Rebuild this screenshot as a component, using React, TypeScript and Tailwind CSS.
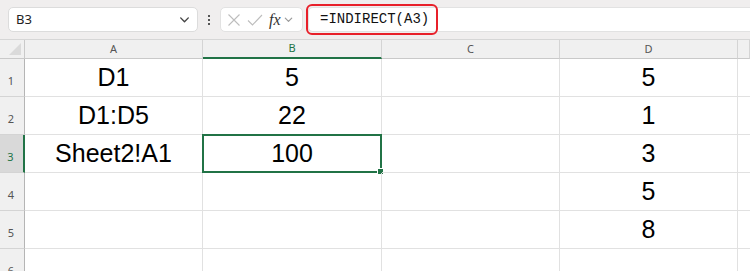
import { FC } from "react";

const cols = ["A", "B", "C", "D"];
const rows: string[][] = [
  ["D1", "5", "", "5"],
  ["D1:D5", "22", "", "1"],
  ["Sheet2!A1", "100", "", "3"],
  ["", "", "", "5"],
  ["", "", "", "8"],
  ["", "", "", ""],
];

const Chevron: FC<{ className?: string }> = ({ className }) => (
  <svg viewBox="0 0 12 12" className={className} fill="none" stroke="currentColor" strokeWidth="1.3">
    <path d="M2.5 4.5 L6 8 L9.5 4.5" strokeLinecap="round" strokeLinejoin="round" />
  </svg>
);

const App: FC = () => {
  return (
    <div className="h-[271px] w-[750px] overflow-hidden bg-white font-['Liberation_Sans',sans-serif]">
      {/* formula bar */}
      <div className="flex h-[40px] items-center border-b border-[#d6d6d6] bg-[#f0eeee] pl-[8px]">
        <div className="flex h-[25px] w-[190px] items-center justify-between rounded-[5px] border border-[#dcdcdc] bg-white pl-[7px] pr-[6px] font-['Noto_Sans',sans-serif] text-[13px] text-[#222]">
          <span>B3</span>
          <Chevron className="h-[13px] w-[13px] text-[#444]" />
        </div>
        <div className="flex w-[22px] flex-col items-center gap-[2px]">
          <span className="h-[2px] w-[2px] bg-[#555]" />
          <span className="h-[2px] w-[2px] bg-[#555]" />
          <span className="h-[2px] w-[2px] bg-[#555]" />
        </div>
        <div className="flex h-[25px] w-[83px] items-center gap-[6px] rounded-[5px] border border-[#e2e2e2] bg-white pl-[6px] text-[#bdbdbd]">
          <svg viewBox="0 0 14 14" className="h-[14px] w-[14px]" stroke="currentColor" strokeWidth="1.1">
            <path d="M1.5 1.5 L12.5 12.5 M12.5 1.5 L1.5 12.5" />
          </svg>
          <svg viewBox="0 0 16 14" className="h-[14px] w-[16px]" fill="none" stroke="currentColor" strokeWidth="1.1">
            <path d="M1 7.5 L5.5 12 L15 2" />
          </svg>
          <span className="font-['Liberation_Serif',serif] text-[16px] italic text-[#333]">fx</span>
          <Chevron className="-ml-[4px] h-[11px] w-[11px] text-[#999]" />
        </div>
        <div className="relative ml-[5px] flex h-[25px] flex-1 items-center rounded-l-[5px] border border-r-0 border-[#e2e2e2] bg-white pl-[11px] font-['Liberation_Mono',monospace] text-[14px] text-[#111]">
          =INDIRECT(A3)
          {/* red highlight annotation */}
          <div className="absolute -left-[3px] -top-[4px] h-[31px] w-[132px] rounded-[6px] border-2 border-[#e8202a]" />
        </div>
      </div>

      {/* grid */}
      <div className="grid grid-cols-[25px_178px_179px_178px_178px_12px] grid-rows-[19px_38px_38px_38px_38px_38px_38px]">
        <div className="relative border-b border-r border-[#c9c9c9] bg-[#f0f0f0]">
          <svg viewBox="0 0 12 12" className="absolute bottom-[3px] right-[3px] h-[12px] w-[12px]">
            <path d="M12 0 L12 12 L0 12 Z" fill="#dadada" />
          </svg>
        </div>
        {[...cols, "E"].map((c) => (
          <div
            key={c}
            className={
              c === "B"
                ? "flex items-center justify-center border-b-2 border-r border-b-[#217346] border-r-[#d4d4d4] bg-[#f0f0f0] font-['Noto_Sans',sans-serif] text-[11px] text-[#217346]"
                : "flex items-center justify-center border-b border-r border-b-[#c9c9c9] border-r-[#d4d4d4] bg-[#f0f0f0] font-['Noto_Sans',sans-serif] text-[11px] text-[#555]"
            }
          >
            {c === "E" ? "" : c}
          </div>
        ))}
        {rows.map((r, i) => (
          <RowCells key={i} index={i} cells={r} />
        ))}
      </div>
    </div>
  );
};

const RowCells: FC<{ index: number; cells: string[] }> = ({ index, cells }) => {
  const selectedRow = index === 2;
  return (
    <>
      <div
        className={
          selectedRow
            ? "flex items-end justify-center border-b border-r-2 border-b-[#d4d4d4] border-r-[#217346] bg-[#d9d9d9] pb-[7px] pr-[2px] font-['Noto_Sans',sans-serif] text-[11px] text-[#217346]"
            : "flex items-end justify-center border-b border-r border-b-[#d4d4d4] border-r-[#b5b5b5] bg-[#f0f0f0] pb-[7px] pr-[2px] font-['Noto_Sans',sans-serif] text-[11px] text-[#555]"
        }
      >
        {index + 1}
      </div>
      {cells.map((v, j) => (
        <div
          key={j}
          className="relative flex items-center justify-center border-b border-r border-[#e1e1e1] pt-[1px] text-[25px] text-black"
        >
          {v}
          {selectedRow && j === 1 && (
            <>
              <div className="absolute -left-[1px] -top-[1px] bottom-[-1px] right-[-1px] border-2 border-[#217346]" />
              <div className="absolute -bottom-[3px] -right-[3px] box-content h-[5px] w-[5px] border border-white bg-[#217346]" />
            </>
          )}
        </div>
      ))}
      <div className="border-b border-[#e1e1e1]" />
    </>
  );
};

export default App;
